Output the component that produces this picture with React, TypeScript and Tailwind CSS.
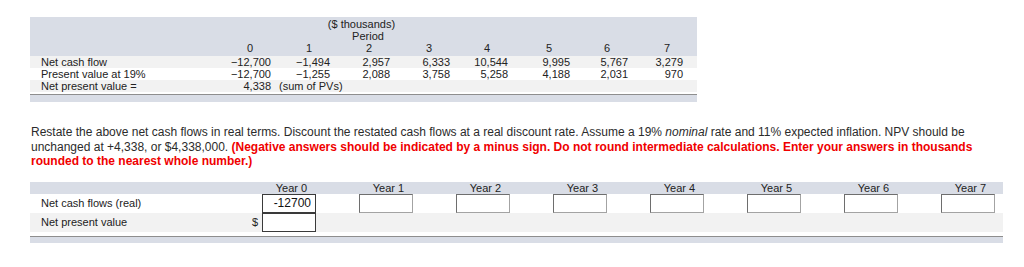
import React from "react";

const HEAD = "bg-[#d9dde6]";
const LIGHT = "bg-[#f2f2f2]";

const cols =
  "grid grid-cols-[186px_59px_59px_60px_60px_58px_62px_58px_65px]";

const periods = ["0", "1", "2", "3", "4", "5", "6", "7"];
const ncf = ["\u221212,700", "\u22121,494", "2,957", "6,333", "10,544", "9,995", "5,767", "3,279"];
const pv = ["\u221212,700", "\u22121,255", "2,088", "3,758", "5,258", "4,188", "2,031", "970"];

function ValueRow({ label, values, bg }: { label: string; values: string[]; bg: string }) {
  return (
    <div className={`${cols} h-[12px] items-center ${bg}`}>
      <div className="pl-[11px] whitespace-nowrap">{label}</div>
      {values.map((v, i) => (
        <div key={i} className={`text-right ${i === 7 ? "pr-[14px]" : "pr-[4px]"}`}>
          {v}
        </div>
      ))}
    </div>
  );
}

function Box({ value, dark }: { value?: string; dark?: boolean }) {
  return (
    <input
      readOnly
      value={value ?? ""}
      className={`w-[54px] h-[19px] bg-white border text-right pr-[4px] text-[12px] leading-[17px] text-[#111] outline-none ${
        dark
          ? "border-[#3a3a3a]"
          : "border-[#a3a3a3] border-t-[#6e6e6e] border-l-[#6e6e6e]"
      }`}
      style={{ fontFamily: '"Liberation Sans", Arial, sans-serif' }}
    />
  );
}

const bcols = "grid grid-cols-[189px_97px_97px_97px_97px_97px_97px_97px_97px_8px]";

export default function App() {
  return (
    <div
      className="w-[1024px] h-[267px] bg-white text-[#222] pt-[17px] pl-[30px]"
      style={{ fontFamily: '"Liberation Sans", Arial, sans-serif' }}
    >
      {/* Top table */}
      <div className="w-[667px] text-[11px] leading-[12px]">
        <div className={`${HEAD} pt-[1px] pb-[2px]`}>
          <div className="ml-[270px] w-[123px] text-center h-[12px]">($ thousands)</div>
          <div className="ml-[270px] w-[136px] text-center h-[12px]">Period</div>
          <div className={`${cols} h-[12px]`}>
            <div />
            {periods.map((p, i) => (
              <div key={p} className={`text-right ${i === 7 ? "pr-[27px]" : "pr-[22px]"}`}>
                {p}
              </div>
            ))}
          </div>
        </div>
        <ValueRow label="Net cash flow" values={ncf} bg={LIGHT} />
        <ValueRow label="Present value at 19%" values={pv} bg="bg-white" />
        <div className={`${cols} h-[12px] items-center ${LIGHT}`}>
          <div className="pl-[11px] whitespace-nowrap">Net present value =</div>
          <div className="text-right pr-[4px]">4,338</div>
          <div className="col-span-3 pl-[4px] whitespace-nowrap">(sum of PVs)</div>
          <div />
          <div />
          <div />
          <div />
        </div>
        <div className="mt-[2px] border-t border-[#8e8e8e]" />
        <div className={`${HEAD} h-[7px]`} />
      </div>

      {/* Instructions */}
      <p className="mt-[23px] pl-[1px] text-[12px] leading-[14.5px] text-[#2b2b2b] whitespace-nowrap">
        Restate the above net cash flows in real terms. Discount the restated cash flows at a real
        discount rate. Assume a 19% <i>nominal</i> rate and 11% expected inflation. NPV should be
        <br />
        unchanged at +4,338, or $4,338,000.{" "}
        <b className="text-[#f00000]">
          (Negative answers should be indicated by a minus sign. Do not round intermediate
          calculations. Enter your answers in thousands
          <br />
          rounded to the nearest whole number.)
        </b>
      </p>

      {/* Bottom table */}
      <div className="mt-[13px] w-[973px] text-[11px] leading-[12px]">
        <div className={`${bcols} ${HEAD} h-[12px] items-center`}>
          <div />
          {periods.map((p) => (
            <div key={p} className="flex justify-end">
              <div className="w-[54px] pl-[5px] text-center whitespace-nowrap">Year {p}</div>
            </div>
          ))}
          <div />
        </div>
        <div className={`${bcols} h-[19px] items-center bg-white`}>
          <div className="pl-[11px] whitespace-nowrap">Net cash flows (real)</div>
          {periods.map((p, i) => (
            <div key={p} className="flex justify-end">
              <Box value={i === 0 ? "-12700" : ""} dark={i === 0} />
            </div>
          ))}
          <div />
        </div>
        <div className={`${bcols} h-[19px] items-center ${LIGHT}`}>
          <div className="pl-[11px] whitespace-nowrap">Net present value</div>
          <div className="flex justify-end items-center gap-[4px]">
            <span>$</span>
            <Box dark />
          </div>
          <div className="col-span-8" />
        </div>
        <div className="mt-[4px] border-t border-[#8e8e8e]" />
        <div className={`${HEAD} h-[6px]`} />
      </div>
    </div>
  );
}
